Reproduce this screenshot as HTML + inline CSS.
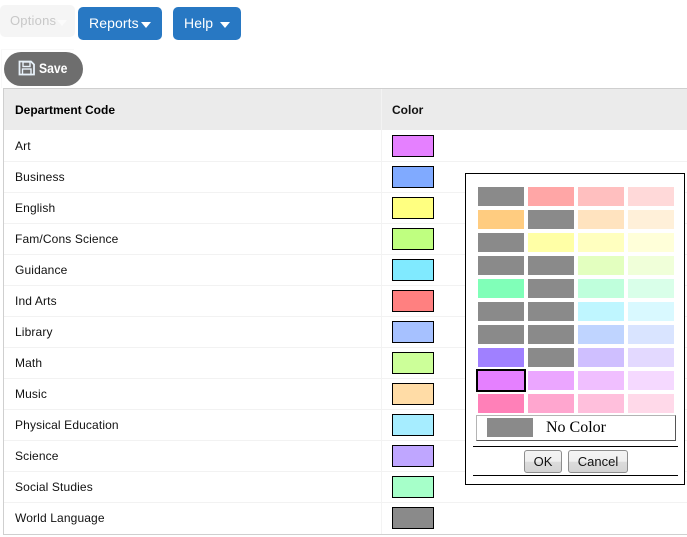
<!DOCTYPE html>
<html>
<head>
<meta charset="utf-8">
<style>
html,body{margin:0;padding:0;background:#fff;}
body{width:687px;height:537px;overflow:hidden;position:relative;font-family:"Liberation Sans",sans-serif;font-size:12px;color:#000;}
.a{position:absolute;}
.btn{position:absolute;background:#2878c3;border-radius:5px;color:#fff;font-size:14px;line-height:33px;height:33px;top:7px;}
.tri{position:absolute;width:0;height:0;border-left:5px solid transparent;border-right:5px solid transparent;border-top:6px solid #fff;}
.row{position:absolute;left:15px;height:16px;line-height:16px;color:#111;letter-spacing:.13px;}
.sep{position:absolute;left:4px;width:683px;height:1px;background:#f2f2f2;}
.sw{position:absolute;left:392px;width:40px;height:20px;border:1px solid #000;}
.p{position:absolute;width:46px;height:19px;}
.pb{position:absolute;top:450px;height:21px;border:1px solid #8e8e8e;border-radius:3px;background:linear-gradient(#f4f4f4 0%,#efefef 50%,#dcdcdc 52%,#d4d4d4 100%);font-family:"Liberation Sans",sans-serif;font-size:13px;line-height:22px;text-align:center;color:#111;}
</style>
</head>
<body>
<div class="a" style="left:0;top:5px;width:75px;height:32px;background:#f5f5f5;border-radius:5px;"></div>
<div class="a" style="left:10px;top:13px;font-size:13px;line-height:16px;color:#c8c8c8;letter-spacing:.2px;">Options</div>
<div class="tri" style="left:57px;top:20px;border-top-color:#fbfbfb;"></div>

<div class="btn" style="left:78px;width:84px;"><span class="a" style="left:11px;top:0;letter-spacing:.1px;">Reports</span></div>
<div class="tri" style="left:141px;top:22px;"></div>
<div class="btn" style="left:173px;width:68px;"><span class="a" style="left:11px;top:0;letter-spacing:.1px;">Help</span></div>
<div class="tri" style="left:220px;top:22px;"></div>

<div class="a" style="left:1px;top:49px;width:72px;height:38px;border-top:1px solid #f8f8f8;border-left:1px solid #f8f8f8;"></div>
<div class="a" style="left:4px;top:52px;width:79px;height:34px;background:#6e6e6e;border-radius:17px;"></div>
<svg class="a" style="left:18px;top:60px;" width="18" height="16" viewBox="0 0 18 16">
<path d="M1.5 1.5H13L16 4.500V14.500H1.500Z" fill="none" stroke="#e8f2fa" stroke-width="1.800"/>
<rect x="5" y="2" width="7" height="4.500" fill="none" stroke="#e8f2fa" stroke-width="1.400"/>
<rect x="4.500" y="9" width="8.500" height="5.500" fill="none" stroke="#e8f2fa" stroke-width="1.400"/>
</svg>
<div class="a" style="left:39px;top:60px;font-size:14px;line-height:16px;font-weight:bold;color:#fff;transform:scaleX(.87);transform-origin:0 0;">Save</div>

<div class="a" style="left:3px;top:88px;width:684px;height:447px;box-sizing:border-box;border:1px solid #cfcfcf;border-right:none;"></div>
<div class="a" style="left:4px;top:89px;width:683px;height:41px;background:#ebebeb;"></div>
<div class="a" style="left:381px;top:89px;width:1px;height:445px;background:#f3f3f3;"></div>
<div class="row" style="top:102px;font-weight:bold;color:#000;letter-spacing:0;">Department Code</div>
<div class="row" style="top:102px;left:392px;font-weight:bold;color:#111;letter-spacing:0;">Color</div>

<div class="sep" style="top:161px;"></div>
<div class="sep" style="top:192px;"></div>
<div class="sep" style="top:223px;"></div>
<div class="sep" style="top:254px;"></div>
<div class="sep" style="top:285px;"></div>
<div class="sep" style="top:316px;"></div>
<div class="sep" style="top:347px;"></div>
<div class="sep" style="top:378px;"></div>
<div class="sep" style="top:409px;"></div>
<div class="sep" style="top:440px;"></div>
<div class="sep" style="top:471px;"></div>
<div class="sep" style="top:502px;"></div>

<div class="row" style="top:138px;">Art</div>
<div class="row" style="top:169px;">Business</div>
<div class="row" style="top:200px;">English</div>
<div class="row" style="top:231px;">Fam/Cons Science</div>
<div class="row" style="top:262px;">Guidance</div>
<div class="row" style="top:293px;">Ind Arts</div>
<div class="row" style="top:324px;">Library</div>
<div class="row" style="top:355px;">Math</div>
<div class="row" style="top:386px;">Music</div>
<div class="row" style="top:417px;">Physical Education</div>
<div class="row" style="top:448px;">Science</div>
<div class="row" style="top:479px;">Social Studies</div>
<div class="row" style="top:510px;">World Language</div>

<div class="sw" style="top:135px;background:#e580ff;"></div>
<div class="sw" style="top:166px;background:#80aaff;"></div>
<div class="sw" style="top:197px;background:#ffff80;"></div>
<div class="sw" style="top:228px;background:#bfff80;"></div>
<div class="sw" style="top:259px;background:#80eaff;"></div>
<div class="sw" style="top:290px;background:#ff8080;"></div>
<div class="sw" style="top:321px;background:#a6c1ff;"></div>
<div class="sw" style="top:352px;background:#ccff99;"></div>
<div class="sw" style="top:383px;background:#ffdca6;"></div>
<div class="sw" style="top:414px;background:#a6edff;"></div>
<div class="sw" style="top:445px;background:#bfa6ff;"></div>
<div class="sw" style="top:476px;background:#a6ffc9;"></div>
<div class="sw" style="top:507px;background:#8a8a8a;"></div>

<div class="a" style="left:465px;top:173px;width:218px;height:310px;border:1px solid #000;background:#fff;"></div>

<div class="p" style="left:478px;top:187px;background:#8a8a8a;"></div>
<div class="p" style="left:528px;top:187px;background:#ffa6a6;"></div>
<div class="p" style="left:578px;top:187px;background:#ffbfbf;"></div>
<div class="p" style="left:628px;top:187px;background:#ffd9d9;"></div>

<div class="p" style="left:478px;top:210px;background:#ffcc80;"></div>
<div class="p" style="left:528px;top:210px;background:#8a8a8a;"></div>
<div class="p" style="left:578px;top:210px;background:#ffe3bf;"></div>
<div class="p" style="left:628px;top:210px;background:#fff0d9;"></div>

<div class="p" style="left:478px;top:233px;background:#8a8a8a;"></div>
<div class="p" style="left:528px;top:233px;background:#ffffa6;"></div>
<div class="p" style="left:578px;top:233px;background:#ffffbf;"></div>
<div class="p" style="left:628px;top:233px;background:#ffffd9;"></div>

<div class="p" style="left:478px;top:256px;background:#8a8a8a;"></div>
<div class="p" style="left:528px;top:256px;background:#8a8a8a;"></div>
<div class="p" style="left:578px;top:256px;background:#e3ffbf;"></div>
<div class="p" style="left:628px;top:256px;background:#f0ffd9;"></div>

<div class="p" style="left:478px;top:279px;background:#80ffb8;"></div>
<div class="p" style="left:528px;top:279px;background:#8a8a8a;"></div>
<div class="p" style="left:578px;top:279px;background:#bfffdc;"></div>
<div class="p" style="left:628px;top:279px;background:#d9ffe9;"></div>

<div class="p" style="left:478px;top:302px;background:#8a8a8a;"></div>
<div class="p" style="left:528px;top:302px;background:#8a8a8a;"></div>
<div class="p" style="left:578px;top:302px;background:#bff6ff;"></div>
<div class="p" style="left:628px;top:302px;background:#d9f9ff;"></div>

<div class="p" style="left:478px;top:325px;background:#8a8a8a;"></div>
<div class="p" style="left:528px;top:325px;background:#8a8a8a;"></div>
<div class="p" style="left:578px;top:325px;background:#bfd4ff;"></div>
<div class="p" style="left:628px;top:325px;background:#d9e4ff;"></div>

<div class="p" style="left:478px;top:348px;background:#a080ff;"></div>
<div class="p" style="left:528px;top:348px;background:#8a8a8a;"></div>
<div class="p" style="left:578px;top:348px;background:#cfbfff;"></div>
<div class="p" style="left:628px;top:348px;background:#e3d9ff;"></div>

<div class="a" style="left:476px;top:369px;width:46px;height:19px;border:2px solid #000;background:#e580ff;"></div>
<div class="p" style="left:528px;top:371px;background:#eba6ff;"></div>
<div class="p" style="left:578px;top:371px;background:#f0bfff;"></div>
<div class="p" style="left:628px;top:371px;background:#f5d9ff;"></div>

<div class="p" style="left:478px;top:394px;background:#ff80b8;"></div>
<div class="p" style="left:528px;top:394px;background:#ffa6cf;"></div>
<div class="p" style="left:578px;top:394px;background:#ffbfdc;"></div>
<div class="p" style="left:628px;top:394px;background:#ffd9e9;"></div>

<div class="a" style="left:476px;top:415px;width:198px;height:24px;border:1px solid;border-color:#b4b4b4 #555 #555 #b4b4b4;"></div>
<div class="p" style="left:487px;top:418px;background:#8a8a8a;"></div>
<div class="a" style="left:546px;top:419px;font-family:'Liberation Serif',serif;font-size:16px;line-height:18px;color:#000;">No Color</div>

<div class="a" style="left:473px;top:446px;width:205px;height:1px;background:#000;"></div>
<div class="pb" style="left:524px;width:36px;">OK</div>
<div class="pb" style="left:568px;width:58px;">Cancel</div>
<div class="a" style="left:473px;top:475px;width:205px;height:1px;background:#000;"></div>
</body>
</html>
